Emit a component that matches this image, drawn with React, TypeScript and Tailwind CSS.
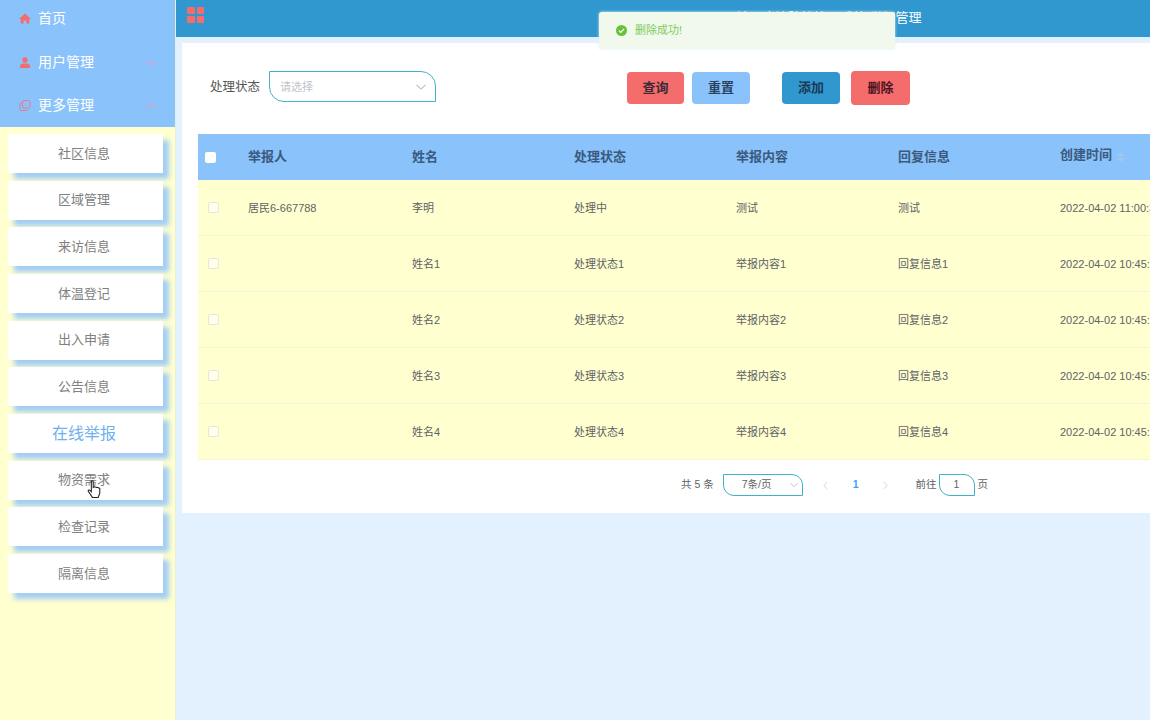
import React from "react";

const FONT = { fontFamily: '"Liberation Sans", "Noto Sans CJK SC", sans-serif' };

const subItems = ["社区信息", "区域管理", "来访信息", "体温登记", "出入申请", "公告信息", "在线举报", "物资需求", "检查记录", "隔离信息"];

const rows = [
  ["居民6-667788", "李明", "处理中", "测试", "测试", "2022-04-02 11:00:33"],
  ["", "姓名1", "处理状态1", "举报内容1", "回复信息1", "2022-04-02 10:45:33"],
  ["", "姓名2", "处理状态2", "举报内容2", "回复信息2", "2022-04-02 10:45:33"],
  ["", "姓名3", "处理状态3", "举报内容3", "回复信息3", "2022-04-02 10:45:33"],
  ["", "姓名4", "处理状态4", "举报内容4", "回复信息4", "2022-04-02 10:45:33"],
];

function Chevron({ up, className }: { up?: boolean; className: string }) {
  return (
    <svg viewBox="0 0 12 12" className={className} fill="none" stroke="currentColor" strokeWidth="1.1">
      <path d={up ? "M1.5 8 L6 4 L10.5 8" : "M1.5 4 L6 8 L10.5 4"} />
    </svg>
  );
}

function MenuRow({ icon, label, arrow }: { icon: React.ReactNode; label: string; arrow?: "up" | "down" }) {
  return (
    <div className="h-[43.5px] flex items-center pl-[19px] relative text-white text-[14px]">
      <span className="w-[12px] h-[12px] mr-[7px] flex items-center justify-center">{icon}</span>
      <span>{label}</span>
      {arrow && <Chevron up={arrow === "up"} className="absolute right-[18px] top-[16px] w-[12px] h-[12px] text-[#dd9fc0]" />}
    </div>
  );
}

function Check({ header }: { header?: boolean }) {
  return <span className={header ? "block w-[11px] h-[11px] bg-white rounded-[2px]" : "block w-[11px] h-[11px] bg-white/60 border border-[#e6e6dc] rounded-[2px]"} />;
}

const cols = "grid grid-cols-[50px_164px_162px_162px_162px_162px_1fr]";

function Btn({ label, cls }: { label: string; cls: string }) {
  return <button className={`flex items-center justify-center rounded-[4px] text-[13px] font-bold ${cls}`}>{label}</button>;
}

export default function App() {
  return (
    <div style={FONT} className="w-[1150px] h-[720px] overflow-hidden flex bg-[#e3f1fe] relative">
      <aside className="w-[176px] h-full shrink-0 bg-[#ffffcf] border-r border-[#e8eddc] flex flex-col">
        <div className="bg-[#8ac3fb] h-[130px] -mt-[3px] shrink-0">
          <MenuRow
            label="首页"
            icon={<svg viewBox="0 0 12 12" className="w-[13px] h-[13px]" fill="#f56c6c"><path d="M6 1 L12 6.5 L10.3 6.5 L10.3 11 L7.4 11 L7.4 8 L4.6 8 L4.6 11 L1.7 11 L1.7 6.5 L0 6.5 Z" /></svg>}
          />
          <MenuRow
            label="用户管理"
            arrow="down"
            icon={<svg viewBox="0 0 12 12" className="w-[13px] h-[13px]" fill="#f56c6c"><circle cx="6" cy="3.4" r="2.6" /><path d="M1 11.5 V9.5 C1 7.6 3 7 6 7 C9 7 11 7.6 11 9.5 V11.5 Z" /></svg>}
          />
          <MenuRow
            label="更多管理"
            arrow="up"
            icon={<svg viewBox="0 0 12 12" className="w-[13px] h-[13px]" fill="none" stroke="#e8798f" strokeWidth="1"><rect x="3.5" y="1" width="7.5" height="7.5" rx="1.5" /><path d="M2.8 3.5 H2 C1.4 3.5 1 3.9 1 4.5 V10 C1 10.6 1.4 11 2 11 H7.5 C8.1 11 8.5 10.6 8.5 10 V9.2" /></svg>}
          />
        </div>
        <div className="pl-[8px] pt-[7px] flex flex-col gap-[7.67px]">
          {subItems.map((t) => (
            <div
              key={t}
              className={
                t === "在线举报"
                  ? "w-[155px] h-[39px] shrink-0 bg-white flex items-center justify-center pr-[3px] pt-[2px] text-[16px] text-[#6fb1f0] shadow-[6px_6px_5px_0_#a3cdf5]"
                  : "w-[155px] h-[39px] shrink-0 bg-white flex items-center justify-center pr-[3px] text-[13px] text-[#808080] shadow-[6px_6px_5px_0_#a3cdf5]"
              }
            >
              {t}
            </div>
          ))}
        </div>
      </aside>

      <main className="flex-1 min-w-0 flex flex-col">
        <header className="h-[37px] shrink-0 bg-[#3097cf] flex items-center pl-[11px] relative">
          <span className="grid grid-cols-2 gap-[2px] w-[17px] -mt-[7px]">
            <span className="h-[7px] bg-[#f56c6c] rounded-[1px]" />
            <span className="h-[7px] bg-[#f56c6c] rounded-[1px]" />
            <span className="h-[7px] bg-[#f56c6c] rounded-[1px]" />
            <span className="h-[7px] bg-[#f56c6c] rounded-[1px]" />
          </span>
          <span className="absolute left-[560px] top-[8px] text-[13px] text-white whitespace-nowrap">社区疫情防控管理系统 举报管理</span>
        </header>

        <section className="mt-[6px] ml-[6px] w-[1000px] h-[470px] bg-white shrink-0 relative pl-[16px]">
          <div className="h-[91px] flex items-start pt-[29px]">
            <span className="text-[12.5px] text-[#555] ml-[12px] mt-[6px] w-[59px] shrink-0">处理状态</span>
            <div className="w-[167px] h-[31px] -mt-[1px] border border-[#3fb3c7] rounded-tr-[15px] rounded-bl-[15px] flex items-center justify-between pl-[10px] pr-[8px] pt-[1px] text-[11px] text-[#c0c4cc] shrink-0">
              <span>请选择</span>
              <Chevron className="w-[12px] h-[12px] text-[#c0c4cc]" />
            </div>
            <Btn label="查询" cls="ml-[191px] w-[57px] h-[32px] bg-[#f56c6c] text-[#3a2a35]" />
            <Btn label="重置" cls="ml-[8px] w-[58px] h-[32px] bg-[#8ac3fb] text-[#2a4060]" />
            <Btn label="添加" cls="ml-[32px] w-[58px] h-[32px] bg-[#3097cf] text-[#1c3a55]" />
            <Btn label="删除" cls="ml-[11px] w-[59px] h-[34px] -mt-[1px] bg-[#f56c6c] text-[#4a1520]" />
          </div>

          <div className="w-[985px] overflow-hidden">
            <div className={`${cols} h-[46px] bg-[#8ac3fb] items-center text-[13px] font-bold text-[#3b5a80]`}>
              <span className="pl-[7px]"><Check header /></span>
              {["举报人", "姓名", "处理状态", "举报内容", "回复信息"].map((h) => (
                <span key={h}>{h}</span>
              ))}
              <span className="flex items-center whitespace-nowrap -mt-[4px]">
                创建时间
                <svg viewBox="0 0 8 10" className="ml-[5px] mt-[3px] w-[8px] h-[10px]" fill="#a3c8ee"><path d="M4 0.5 L7.5 4 H0.5 Z M4 9.5 L0.5 6 H7.5 Z" /></svg>
              </span>
            </div>
            {rows.map((r, i) => (
              <div key={i} className={`${cols} h-[56px] bg-[#ffffcf] border-b border-[#f4f4d8] items-center text-[11px] text-[#606266]`}>
                <span className="pl-[10px]"><Check /></span>
                {r.map((c, j) => (
                  <span key={j} className="whitespace-nowrap pt-[1px]">{c}</span>
                ))}
              </div>
            ))}
          </div>

          <div className="flex items-center h-[50px] pl-[483px] text-[10.5px] text-[#606266] whitespace-nowrap">
            <span>共 5 条</span>
            <div className="ml-[9px] w-[80px] h-[22px] border border-[#3fb3c7] rounded-tr-[11px] rounded-bl-[11px] flex items-center justify-between pl-[18px] pr-[3px] shrink-0">
              <span>7条/页</span>
              <Chevron className="w-[10px] h-[10px] text-[#c0c4cc]" />
            </div>
            <span className="ml-[18px] text-[#c0c4cc]"><svg viewBox="0 0 12 12" className="w-[9px] h-[9px]" fill="none" stroke="currentColor"><path d="M8 1.5 L4 6 L8 10.5" /></svg></span>
            <span className="ml-[23px] font-bold text-[#409eff]">1</span>
            <span className="ml-[22px] text-[#c0c4cc]"><svg viewBox="0 0 12 12" className="w-[9px] h-[9px]" fill="none" stroke="currentColor"><path d="M4 1.5 L8 6 L4 10.5" /></svg></span>
            <span className="ml-[26px] mr-[2px]">前往</span>
            <span className="w-[36px] h-[22px] border border-[#3fb3c7] rounded-tr-[11px] rounded-bl-[11px] flex items-center justify-center shrink-0">1</span>
            <span className="ml-[3px]">页</span>
          </div>
        </section>
      </main>

      <div className="absolute left-[599px] top-[12px] w-[296px] h-[37px] bg-[#f0f9eb] rounded-[3px] shadow-[0_0_3px_0_#dbeef0] flex items-center pl-[17px] text-[11px] text-[#7fcb5c]">
        <svg viewBox="0 0 12 12" className="w-[11px] h-[11px] mr-[8px]"><circle cx="6" cy="6" r="6" fill="#67c23a" /><path d="M3.2 6.2 L5.2 8.1 L8.8 4.2" stroke="#fff" strokeWidth="1.3" fill="none" /></svg>
        删除成功!
      </div>

      <svg viewBox="0 0 14 18" className="absolute left-[87px] top-[480px] w-[15px] h-[19px]">
        <path d="M4 1.5 C4 .6 5.8 .6 5.8 1.5 V7 L7.2 6.5 L8.8 7 L10.2 7.2 L12 8 V12.5 L10.5 16.5 H5 L1 10.5 C.8 9.5 2 9 3 10 L4 11 Z" fill="#fff" stroke="#222" strokeWidth="1" />
      </svg>
    </div>
  );
}
